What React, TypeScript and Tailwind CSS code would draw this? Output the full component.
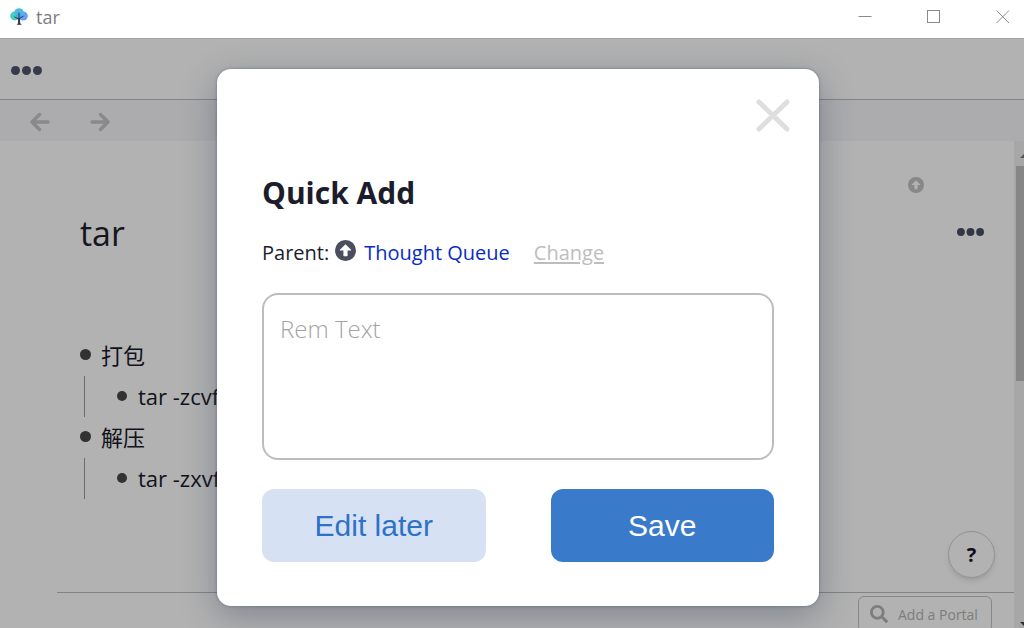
import React from "react";
import { FaSearch } from "react-icons/fa";

// Top level rems with their single child
const rems = [
  { id: "pack", text: "打包", child: "tar -zcvf" },
  { id: "unpack", text: "解压", child: "tar -zxvf" },
];

function TreeLogo() {
  return (
    <svg width="18" height="18" viewBox="0 0 18 18" aria-hidden="true">
      <circle cx="4.6" cy="8" r="4.4" fill="#3fd0c4" />
      <circle cx="13.2" cy="8" r="4.6" fill="#6b9df8" />
      <circle cx="9" cy="5" r="4.8" fill="#4bbbe0" />
      <circle cx="9" cy="8.5" r="3.2" fill="#4aa9dc" />
      <path
        d="M9 5v11M9 11.2 4.8 9M9 10.6 13 8.4"
        fill="none"
        stroke="#33354a"
        strokeWidth="1"
        strokeLinecap="round"
      />
      <path d="M8.3 10h1.6l.3 5.2 1.6 1.6H6.6l1.5-1.6z" fill="#33354a" />
    </svg>
  );
}

function Arrow({ back = false }: { back?: boolean }) {
  return (
    <svg width="20" height="20" viewBox="0 0 20 20" aria-hidden="true">
      <path
        d={back ? "M18 10H2.5M9.5 2.5 2 10l7.5 7.5" : "M2 10h15.5M10.5 2.5 18 10l-7.5 7.5"}
        fill="none"
        stroke="currentColor"
        strokeWidth="3.4"
        strokeLinecap="round"
        strokeLinejoin="round"
      />
    </svg>
  );
}

function CircleUp({ className }: { className: string }) {
  return (
    <svg className={className} viewBox="0 0 20 20" aria-hidden="true">
      <circle cx="10" cy="10" r="10" fill="currentColor" />
      <path
        d="M10 4 15.300 9.300q.4.700-.4.800H12v4.600q0 .7-.7.700H8.700q-.7 0-.7-.7V10.100H5.100q-.8-.1-.4-.8z"
        className="fill-white"
      />
    </svg>
  );
}

function Dots({ className }: { className: string }) {
  return (
    <svg className={className} viewBox="0 0 31 9" fill="currentColor" aria-hidden="true">
      <circle cx="4.500" cy="4.500" r="4.500" />
      <circle cx="15.500" cy="4.500" r="4.500" />
      <circle cx="26.500" cy="4.500" r="4.500" />
    </svg>
  );
}

function TitleBar() {
  return (
    <header className="flex h-[38px] shrink-0 items-center bg-white pl-2.5 pr-3.5 pb-1">
      <TreeLogo />
      <span className="ml-2 flex-1 text-[18px] leading-6 text-[#7d7d7d]">tar</span>
      <div className="flex gap-[55px] text-[#8a8a8a]">
        <button type="button" aria-label="Minimize">
          <svg width="14" height="14" viewBox="0 0 14 14" stroke="currentColor">
            <path d="M.5 6.500h13" />
          </svg>
        </button>
        <button type="button" aria-label="Maximize">
          <svg width="14" height="14" viewBox="0 0 14 14" fill="none" stroke="currentColor">
            <rect x=".5" y=".5" width="12" height="12" />
          </svg>
        </button>
        <button type="button" aria-label="Close window">
          <svg width="14" height="14" viewBox="0 0 14 14" stroke="currentColor">
            <path d="m.5.500 12.500 12.500M13 .5.500 13" />
          </svg>
        </button>
      </div>
    </header>
  );
}

function Document() {
  return (
    <main className="relative flex min-w-0 flex-1 flex-col">
      <div className="flex justify-end pt-9 pr-[90px]">
        <CircleUp className="size-4 text-[#c3c3c3]" />
      </div>
      <div className="mt-3 flex items-center justify-between pl-20 pr-[30px]">
        <h1 className="text-[34px] leading-[56px] text-[#20202c]">tar</h1>
        <button type="button" aria-label="Document options" className="pb-0.5 text-[#4a4e62]">
          <Dots className="h-2 w-[27px]" />
        </button>
      </div>

      <ul className="mt-[74px] flex-1 pl-20 text-[22px] leading-[41px] text-[#1b1b2b]">
        {rems.map((rem) => (
          <li key={rem.id}>
            <div className="flex items-center gap-2.5 whitespace-nowrap">
              <span className="mb-0.5 size-[11px] rounded-full bg-[#484848]" />
              <span>{rem.text}</span>
            </div>
            <ul className="ml-1 border-l border-[#9a9ca8] pl-8">
              <li className="flex items-center gap-[11px] whitespace-nowrap">
                <span className="mb-0.5 size-2.5 rounded-full bg-[#484848]" />
                <span>{rem.child}</span>
              </li>
            </ul>
          </li>
        ))}
      </ul>

      <footer className="ml-[57px] flex h-9 shrink-0 justify-end overflow-hidden border-t border-[#bcbcbc] pt-[3px] pr-[22px]">
        <label className="flex h-9 w-[134px] shrink-0 items-center gap-2.5 rounded-md border border-[#c2c2c2] pl-[11px] text-[#b8b8b8]">
          <FaSearch className="size-[18px] shrink-0 text-[#b5b5b5]" />
          <input
            type="text"
            aria-label="Add a Portal"
            placeholder="Add a Portal"
            className="min-w-0 flex-1 text-[14px] outline-none placeholder:text-[#b4b4b4]"
          />
        </label>
      </footer>

      <button
        type="button"
        aria-label="Help"
        className="absolute right-[19px] bottom-[50px] size-[47px] rounded-full border border-[#d0d0d0] text-[20px] font-bold text-[#15152a] shadow-md"
      >
        ?
      </button>
    </main>
  );
}

function Scrollbar() {
  return (
    <div className="flex w-2.5 shrink-0 flex-col overflow-hidden bg-[#f0f0f0] pl-0.5" aria-hidden="true">
      <svg width="10" height="25" viewBox="0 0 10 25" className="shrink-0">
        <path d="m4 17 5-5 5 5z" fill="#777" />
      </svg>
      <div className="h-[215px] bg-[#c1c1c1]" />
      <svg width="10" height="10" viewBox="0 0 10 10" className="mt-auto shrink-0">
        <path d="m4 4 5 5 5-5z" fill="#444" />
      </svg>
    </div>
  );
}

function QuickAddDialog() {
  return (
    <form
      role="dialog"
      aria-labelledby="quick-add-title"
      className="flex w-[602px] flex-col rounded-[14px] bg-white px-[45px] pt-7 pb-11 shadow-[0_10px_34px_rgba(35,50,75,0.35),0_0_3px_rgba(35,50,75,0.4)]"
      onSubmit={(e) => e.preventDefault()}
    >
      <button type="button" aria-label="Close" className="-mr-4 self-end text-[#dedede]">
        <svg width="34" height="36" viewBox="0 0 34 36">
          <path
            d="m3 5 28 27M31 5 3 32"
            stroke="currentColor"
            strokeWidth="5"
            strokeLinecap="round"
          />
        </svg>
      </button>

      <h2 id="quick-add-title" className="mt-[37px] text-[30px] leading-[46px] font-bold text-[#1b1d2c]">
        Quick Add
      </h2>

      <div className="mt-[21px] flex items-center text-[20px] leading-8 text-[#1b1d2c]">
        <span>Parent:</span>
        <CircleUp className="mb-1.5 ml-1.5 size-[21px] text-[#4a4e5e]" />
        <a href="#thought-queue" className="ml-2 text-[#0a2bc4]">
          Thought Queue
        </a>
        <button type="button" className="ml-6 text-[#bdbdbd] underline underline-offset-2">
          Change
        </button>
      </div>

      <textarea
        aria-label="Rem Text"
        placeholder="Rem Text"
        className="mt-6 block h-[167px] w-full resize-none rounded-2xl border-2 border-[#bdbdbd] px-4 pt-4 text-[24px] leading-9 font-light outline-none placeholder:text-[#a3a3a3]"
      />

      <div className="mt-[29px] grid grid-cols-2 gap-[65px] font-['Liberation_Sans',Arial,sans-serif] text-[30px]">
        <button type="button" className="h-[73px] rounded-xl bg-[#d6e2f3] text-[#2d72c6]">
          Edit later
        </button>
        <button type="submit" className="h-[73px] rounded-xl bg-[#397bca] text-white">
          Save
        </button>
      </div>
    </form>
  );
}

export default function App() {
  return (
    <div className="flex h-screen flex-col overflow-hidden bg-white font-['Open_Sans','Noto_Sans_CJK_SC',sans-serif]">
      <TitleBar />
      <div className="relative flex min-h-0 flex-1 flex-col border-t border-[#a6a6a6]">
        <div className="flex h-[61px] shrink-0 items-center border-b border-[#bcbcbc] px-[11px] pt-0.5">
          <button type="button" aria-label="Menu" className="text-[#4f546c]">
            <Dots className="h-[9px] w-[31px]" />
          </button>
        </div>
        <nav className="flex h-[41px] shrink-0 items-center gap-10 bg-[#f6f6fa] px-[30px] pt-0.5 text-[#c4c4c4]">
          <button type="button" aria-label="Back">
            <Arrow back />
          </button>
          <button type="button" aria-label="Forward">
            <Arrow />
          </button>
        </nav>
        <div className="flex min-h-0 flex-1">
          <Document />
          <Scrollbar />
        </div>

        {/* Dimmed backdrop with the dialog on top */}
        <div className="absolute inset-0 flex items-start justify-center bg-black/30 pt-[30px] pl-3">
          <QuickAddDialog />
        </div>
      </div>
    </div>
  );
}
